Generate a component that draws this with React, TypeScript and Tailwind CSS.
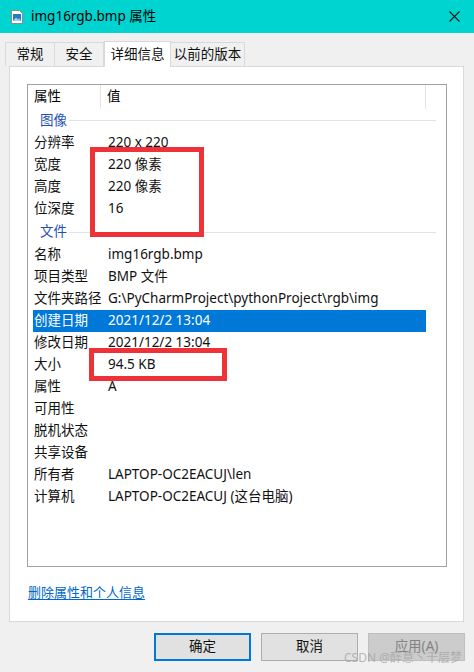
import React from 'react';

type Row = { k: string; v?: string; selected?: boolean };

const imageRows: Row[] = [
  { k: '分辨率', v: '220 x 220' },
  { k: '宽度', v: '220 像素' },
  { k: '高度', v: '220 像素' },
  { k: '位深度', v: '16' },
];

const fileRows: Row[] = [
  { k: '名称', v: 'img16rgb.bmp' },
  { k: '项目类型', v: 'BMP 文件' },
  { k: '文件夹路径', v: 'G:\\PyCharmProject\\pythonProject\\rgb\\img' },
  { k: '创建日期', v: '2021/12/2 13:04', selected: true },
  { k: '修改日期', v: '2021/12/2 13:04' },
  { k: '大小', v: '94.5 KB' },
  { k: '属性', v: 'A' },
  { k: '可用性' },
  { k: '脱机状态' },
  { k: '共享设备' },
  { k: '所有者', v: 'LAPTOP-OC2EACUJ\\len' },
  { k: '计算机', v: 'LAPTOP-OC2EACUJ (这台电脑)' },
];

const GroupRow = ({ label, tall }: { label: string; tall?: boolean }) => (
  <div className={`${tall ? 'h-[24px]' : 'h-[23px]'} flex items-center pl-[12px] pr-[10px] gap-[2px]`}>
    <span className="text-[#1e50b4]">{label}</span>
    <div className="flex-1 h-px bg-[#dfe3ec]" />
  </div>
);

const PropRow = ({ row }: { row: Row }) => (
  <div
    className={`h-[22px] flex items-center ml-[5px] w-[393px] whitespace-nowrap ${
      row.selected ? 'bg-[#0078d7] text-white' : 'text-[#111]'
    }`}
  >
    <span className="w-[69px] pl-[1px]">{row.k}</span>
    <span className="pl-[6px]">{row.v}</span>
  </div>
);

const FileIcon = () => (
  <svg width="12" height="14" viewBox="0 0 12 14">
    <path d="M0.5 0.5h8l3 3v10h-11z" fill="#fff" stroke="#8a8a8a" />
    <rect x="2" y="4" width="8" height="7" fill="#2b78c5" />
    <path d="M2 11l3-3.5 2 2 1.2-1.2L10 11z" fill="#9fd0f5" />
  </svg>
);

export default function App() {
  return (
    <div
      className="w-[474px] h-[672px] bg-[#f0f0f0] flex flex-col overflow-hidden text-[13.5px] leading-none"
      style={{ fontFamily: '"Noto Sans", "Noto Sans CJK SC", sans-serif' }}
    >
      {/* Title bar */}
      <div className="h-[33px] bg-[#00d4d0] flex items-center pl-[11px] pr-[14px] shrink-0">
        <FileIcon />
        <span className="ml-[8px] text-[13.5px] text-black">img16rgb.bmp 属性</span>
        <svg className="ml-auto" width="11" height="11" viewBox="0 0 11 11">
          <path d="M0.5 0.5l10 10M10.5 0.5l-10 10" stroke="#1b1b1b" strokeWidth="1.1" />
        </svg>
      </div>

      {/* Tabs */}
      <div className="h-[33px] flex items-end pl-[5px] shrink-0 border-t border-[#f7f7f7]">
        <div className="h-[24px] w-[50px] border border-b-0 border-[#d9d9d9] flex items-center justify-center text-[#111]">常规</div>
        <div className="h-[24px] w-[49px] border border-b-0 border-l-0 border-[#d9d9d9] flex items-center justify-center text-[#111]">安全</div>
        <div className="h-[26px] w-[67px] -mb-px bg-white border border-b-0 border-[#d9d9d9] flex items-center justify-center text-[#111] relative z-10">详细信息</div>
        <div className="h-[24px] w-[74px] border border-b-0 border-l-0 border-[#d9d9d9] flex items-center justify-center text-[#111]">以前的版本</div>
      </div>

      {/* Panel */}
      <div className="ml-[9px] w-[455px] h-[556px] bg-white border border-[#d9d9d9] shrink-0 pt-[17px] pl-[17px]">
        <div className="w-[420px] h-[483px] border border-[#a0a0a0] relative">
          {/* header */}
          <div className="h-[24px] flex">
            <div className="w-[73px] pl-[6px] flex items-center border-r border-[#e5e5e5]">属性</div>
            <div className="w-[325px] pl-[6px] flex items-center border-r border-[#e5e5e5]">值</div>
          </div>
          <GroupRow label="图像" />
          {imageRows.map((r) => (
            <PropRow key={r.k} row={r} />
          ))}
          <GroupRow label="文件" tall />
          {fileRows.map((r) => (
            <PropRow key={r.k} row={r} />
          ))}

          {/* annotations */}
          <div className="absolute left-[62px] top-[62px] w-[114px] h-[90px] border-[5px] border-[#ee3338]" />
          <div className="absolute left-[61px] top-[263px] w-[138px] h-[33px] border-[5px] border-[#ee3338]" />
        </div>

        <div className="mt-[19px] pl-px">
          <span className="text-[#0066cc] text-[13px] underline underline-offset-2">删除属性和个人信息</span>
        </div>
      </div>

      {/* Buttons */}
      <div className="flex gap-[10px] pl-[154px] pt-[11px] relative">
        <div className="w-[97px] h-[28px] bg-[#e1e1e1] border-2 border-[#0078d7] flex items-center justify-center text-[#111]">确定</div>
        <div className="w-[97px] h-[28px] bg-[#e1e1e1] border border-[#adadad] flex items-center justify-center text-[#111]">取消</div>
        <div className="w-[97px] h-[28px] bg-[#cccccc] border border-[#bfbfbf] flex items-center justify-center text-[#838383]">应用(A)</div>
        <span className="absolute left-[344px] top-[30px] text-[12px] text-[#a5a5a5]/80 whitespace-nowrap">CSDN @醉意丶千层梦</span>
      </div>
    </div>
  );
}
